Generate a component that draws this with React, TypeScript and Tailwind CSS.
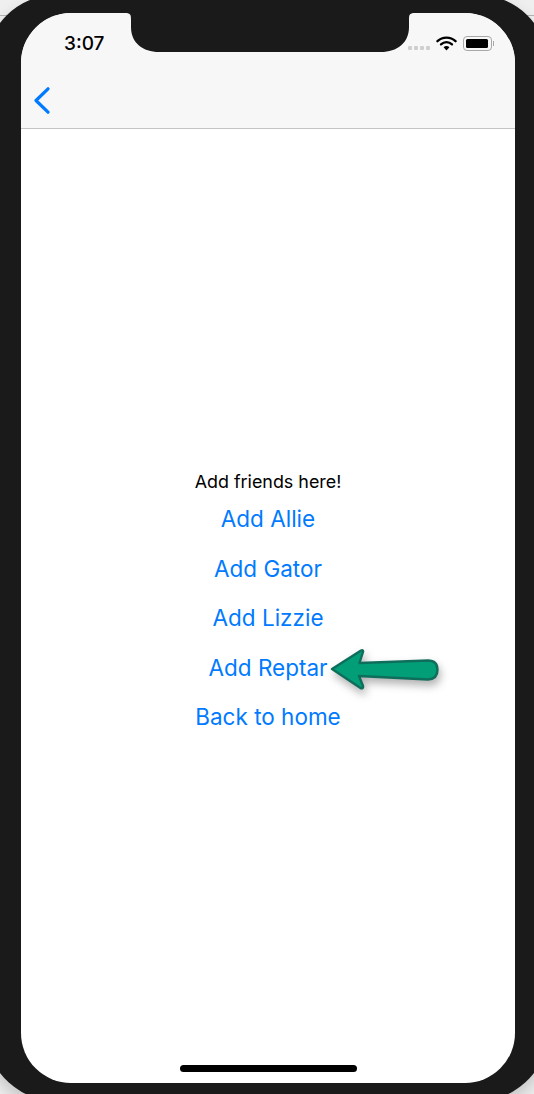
// Simulator screenshot: "Add friends" screen inside a phone bezel.
import React from "react";

const friends = ["Add Allie", "Add Gator", "Add Lizzie", "Add Reptar", "Back to home"];

function Notch() {
  return (
    <svg className="absolute left-[104px] top-0" width="290" height="40" viewBox="0 0 290 40">
      <path
        d="M0 0 H290 C284 0 284 2 284 8 V14 C284 30 272 39 256 39 H34 C18 39 6 30 6 14 V8 C6 2 6 0 0 0 Z"
        fill="#1a1a1a"
      />
    </svg>
  );
}

function StatusIcons() {
  return (
    <div className="absolute left-[387px] top-[23px] flex items-start">
      <div className="mt-[10px] flex gap-[2px]">
        <span className="size-[4px] rounded-[1px] bg-[#cfcfcf]" />
        <span className="size-[4px] rounded-[1px] bg-[#cfcfcf]" />
        <span className="size-[4px] rounded-[1px] bg-[#cfcfcf]" />
        <span className="size-[4px] rounded-[1px] bg-[#cfcfcf]" />
      </div>
      <svg className="ml-[6px]" width="21" height="15" viewBox="0 0 21 15">
        <path d="M1.5 5.2 A13 13 0 0 1 19.5 5.2" fill="none" stroke="#000" strokeWidth="2.4" strokeLinecap="round" />
        <path d="M5 8.4 A8 8 0 0 1 16 8.4" fill="none" stroke="#000" strokeWidth="2.3" strokeLinecap="round" />
        <path d="M7.6 11.2 A4 4 0 0 1 13.4 11.2 L10.5 14.4 Z" fill="#000" />
      </svg>
      <div className="ml-[6px] flex items-center">
        <div className="h-[15px] w-[29px] rounded-[4px] border border-[#a8a8a8] py-[2px] pl-[2px]">
          <div className="h-full w-[22px] rounded-[1.5px] bg-black" />
        </div>
        <span className="ml-[1px] h-[5px] w-[1px] bg-[#a8a8a8]" />
      </div>
    </div>
  );
}

function Arrow() {
  return (
    <svg
      className="absolute left-[305px] top-[634px] drop-shadow-[2px_5px_4px_rgba(0,0,0,0.3)]"
      width="116"
      height="48"
      viewBox="305 634 116 48"
    >
      <path
        transform="translate(-21 -13)"
        d="M332 669 L361 650.5 Q363.5 649.5 363 652 L359.5 663 L428 660.5 Q437.5 660.5 437.5 670 Q437.5 679 428 679.5 L359 676 L363 686 Q363.5 689 360.5 688 Z"
        fill="#019e78"
        stroke="#0f6e5b"
        strokeWidth="2.4"
        strokeLinejoin="round"
      />
    </svg>
  );
}

export default function App() {
  return (
    <div className="relative h-[1094px] w-[534px] overflow-hidden bg-[#efefef]">
      {/* window edge that shows behind the bezel corners */}
      <div className="absolute inset-x-0 top-[15px] h-px bg-[#b4b4b4]" />
      <div className="relative -ml-[14px] -mt-[5px] flex h-[1108px] w-[562px] flex-col rounded-t-[70px] rounded-bl-[78px_70px] rounded-br-[78px_70px] bg-[#1a1a1a] pl-[35px] pr-[33px] pt-[18px] pb-[20px] shadow-[0_8px_16px_rgba(0,0,0,0.18)]">
        <div className="relative flex flex-1 flex-col overflow-hidden rounded-[50px] bg-white font-['Inter',sans-serif]">
          <header className="h-[116px] shrink-0 border-b border-[#c4c4c4] bg-[#f7f7f7] pl-[13px] pt-[74px]">
            <svg width="16" height="27" viewBox="0 0 16 27">
              <path d="M14 1.8 L2 13.5 L14 25.2" fill="none" stroke="#007aff" strokeWidth="3.2" strokeLinecap="round" strokeLinejoin="round" />
            </svg>
          </header>
          <span className="absolute left-[43px] top-[19px] text-[19px] font-medium leading-6 text-black">3:07</span>
          <Notch />
          <StatusIcons />
          <main className="flex flex-1 flex-col items-center pt-[340px]">
            <p className="-mb-[1.3px] text-[17.9px] leading-[26px] text-black">Add friends here!</p>
            {friends.map((label) => (
              <button key={label} className="h-[49.6px] text-[22.5px] leading-[27px] text-[#007aff]">
                {label}
              </button>
            ))}
          </main>
          <Arrow />
          <div className="mx-auto mb-[11px] h-[7px] w-[177px] shrink-0 rounded-full bg-black" />
        </div>
      </div>
    </div>
  );
}
